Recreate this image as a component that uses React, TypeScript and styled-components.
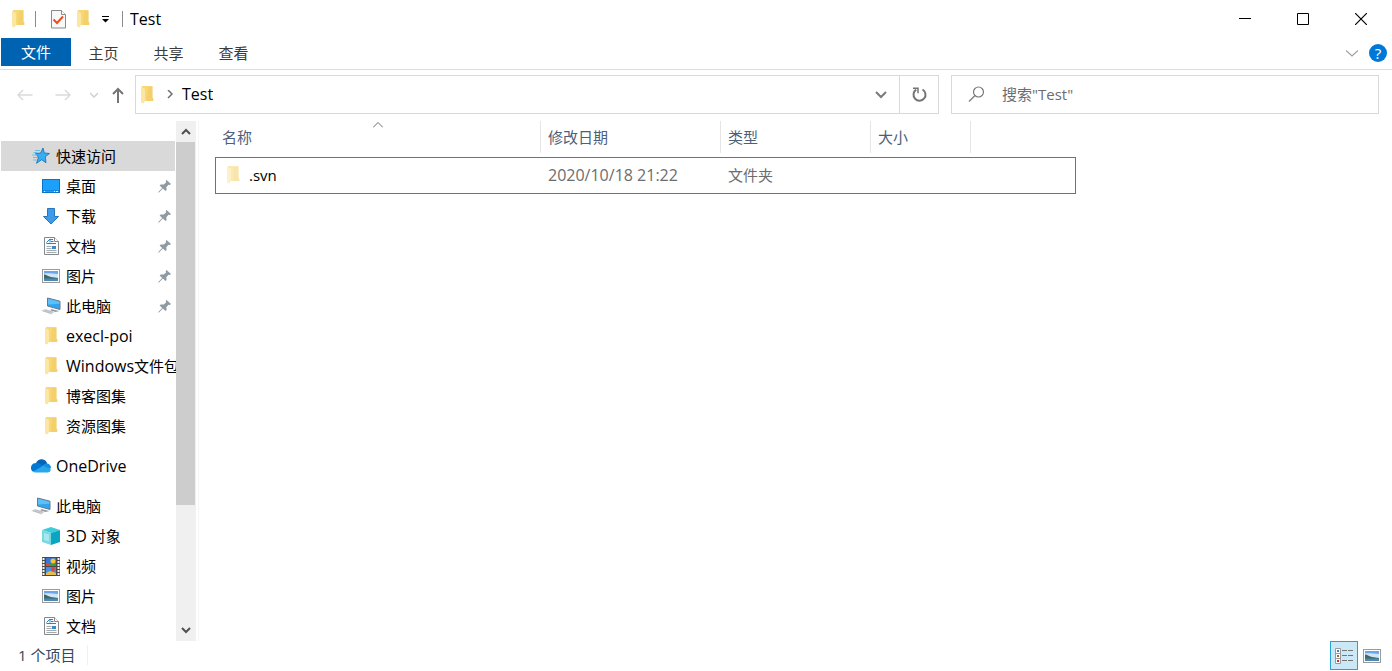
import React from 'react';
import styled, { createGlobalStyle } from 'styled-components';

const GlobalStyle = createGlobalStyle`
  * { box-sizing: border-box; }
  html, body { margin: 0; padding: 0; background: #fff; }
  body, button, input {
    font-family: "Open Sans", "Noto Sans CJK SC", sans-serif;
    font-size: 15px;
    line-height: 20px;
  }
  button { border: 0; padding: 0; background: transparent; color: inherit; }
  svg { display: block; flex: none; }
`;

/* ---------- icons ---------- */

const FolderIcon = ({ faded = false }: { faded?: boolean }) => (
  <svg width="13" height="18" viewBox="0 0 13 18" opacity={faded ? 0.55 : 1} aria-hidden="true">
    <path d="M1 0h10.500v12h.7v3H2z" fill="#f8d775" />
    <path d="M7 1h4.500v11h.7v3H6z" fill="#f0c963" opacity=".5" />
    <path d="M0 .5l4 2.500v12L2.500 17.500 0 16.500z" fill="#fde6a2" />
  </svg>
);

const CheckDocIcon = () => (
  <svg width="15" height="19" viewBox="0 0 15 19" aria-hidden="true">
    <path d="M.5.500h10l4 4v13.500H.5z" fill="#f7f8fa" stroke="#8a8a8a" />
    <path d="M10.500.500v4h4" fill="#fff" stroke="#8a8a8a" />
    <path d="M2.500 9.500l3.500 3.500 6-6.500" fill="none" stroke="#e8501a" strokeWidth="2" />
  </svg>
);

const StarIcon = () => (
  <svg width="18" height="18" viewBox="0 0 18 18" aria-hidden="true">
    <path d="M11 1l1.300 5 5.200.5-4.200 3.200.7 6-4.400-3-5.100 3.600 2-6L3.500 6.500l5-.4z" fill="#35aef5" stroke="#1a78b8" strokeWidth=".9" />
    <path d="M3 3.500h5M1.500 5.500h4M0 8h5M1 10.500h5M1 13h3.500" stroke="#6cbcee" />
  </svg>
);

const DesktopIcon = () => (
  <svg width="18" height="14" viewBox="0 0 18 14" aria-hidden="true">
    <rect x=".5" y=".5" width="17" height="13" fill="#1ba1fb" stroke="#0c74c4" />
    <path d="M1 11.500h16" stroke="#1389dc" />
    <path d="M2 12.500h1M12 12.500h1M14 12.500h2" stroke="#d8f0ff" />
  </svg>
);

const DownloadIcon = () => (
  <svg width="16" height="17" viewBox="0 0 16 17" aria-hidden="true">
    <path d="M4.500.500h7v8h4L8 16 .5 8.500h4z" fill="#3d9be9" stroke="#2577bd" />
  </svg>
);

const DocumentIcon = () => (
  <svg width="15" height="18" viewBox="0 0 15 18" aria-hidden="true">
    <path d="M.5.500h10l4 4v13H.5z" fill="#fafbfc" stroke="#85898d" />
    <path d="M10.500.500v4h4" fill="#fff" stroke="#85898d" />
    <path d="M2.500 5.500L6 2v3.500M6 2.500h3M7 4.500h2.500M2.500 6.500h9.500" fill="none" stroke="#1f86cc" />
    <path d="M2.500 9.500h5M2.500 11.500h5M2.500 13.500h10M2.500 15.500h10" stroke="#a3abb1" />
    <rect x="8" y="9" width="4" height="3" fill="#3c8ac4" />
  </svg>
);

const PictureIcon = () => (
  <svg width="18" height="14" viewBox="0 0 18 14" aria-hidden="true">
    <rect x=".5" y=".5" width="17" height="13" fill="#fff" stroke="#9a9a9a" />
    <rect x="2" y="2" width="14" height="10" fill="#6aa6ee" />
    <path d="M2 4.500c4-.5 8 0 14 .5v4H2z" fill="#cfe6f9" />
    <path d="M2 5.500c2.500 0 3.500 1.500 7 2.500l7 1v1.500H2z" fill="#3f6b60" />
    <path d="M2 9.500h14V12H2z" fill="#4f88b0" />
  </svg>
);

const ComputerIcon = () => (
  <svg width="20" height="18" viewBox="0 0 20 18" aria-hidden="true">
    <path d="M6.500 1l12.500 3.200v8.300L6.500 9z" fill="#2ea5ee" stroke="#68788a" />
    <path d="M7 1.700l11.500 3v2L7 7.500z" fill="#5cc0fb" />
    <path d="M10 12l5 1.300 3.500.7-4 1-5-1.500z" fill="#8e9aa5" />
    <path d="M0 13.700l4-1.700 9.500 2.800-3 2.700z" fill="#d3d7db" />
    <path d="M2 13.800l8 2.400M4 13l8 2.200" stroke="#a9b0b7" strokeWidth=".7" />
  </svg>
);

const CloudIcon = () => (
  <svg width="20" height="14" viewBox="0 0 20 14" aria-hidden="true">
    <path d="M5 4C6 1.500 8.500 0 11 .2c2.700.2 4.600 2 5.200 4.300L10 9z" fill="#0364b8" />
    <path d="M5 4c2-.3 3.500.3 5 1.300L14 8 2 12.800C-.4 11-.5 8 .7 6.200 1.700 4.700 3.200 4 5 4z" fill="#0078d4" />
    <path d="M11.500 6.500c1.500-1.500 3-2.200 4.800-2C18.500 4.700 20 6.500 20 9l-3 2z" fill="#1490df" />
    <path d="M2 12.800L12 6.700l7.800 3.500c0 2-1.500 3.300-3.500 3.300H4.500c-1 0-1.800-.2-2.500-.7z" fill="#28a8ea" />
  </svg>
);

const CubeIcon = () => (
  <svg width="18" height="18" viewBox="0 0 18 18" aria-hidden="true">
    <path d="M0 3l9-3 9 3-9 3z" fill="#3ecbdc" />
    <path d="M0 3l9 3v12l-9-3z" fill="#7ad8e2" />
    <path d="M9 6l9-3v12l-9 3z" fill="#0aa5c2" />
    <path d="M2 6l5 1.500v7L2 13z" fill="#c3eef2" opacity=".65" />
  </svg>
);

const VideoIcon = () => (
  <svg width="18" height="19" viewBox="0 0 18 19" aria-hidden="true">
    <rect width="18" height="19" fill="#4a4a4a" />
    <path d="M1.500 1v17M16.500 1v17" stroke="#f2f2f2" strokeWidth="2" strokeDasharray="2 1" />
    <rect x="4" y="1" width="10" height="8" fill="#3578d8" />
    <rect x="4" y="10" width="10" height="8" fill="#4a90e2" />
    <circle cx="11" cy="4" r="2.500" fill="#f2c230" />
    <path d="M4 6h4v3H4z" fill="#d9483b" />
    <path d="M8 7h5v2H8z" fill="#3f9a48" />
    <circle cx="11" cy="12" r="2" fill="#e2452f" />
    <path d="M4 16l4-2 6 2v2H4z" fill="#e9bd4b" />
  </svg>
);

const PinIcon = () => (
  <svg width="14" height="14" viewBox="0 0 14 14" aria-hidden="true">
    <path d="M8.500 1L13 5l-1.200 1-1.300-.2-2.200 2.400.3 2.800L7.500 12 4.900 9.600 1 13.500H.3V13L4.200 9 1.600 6.500 2.700 5.400l3 .2 2.400-2.200L7.700 2z" fill="#8f9aa3" />
  </svg>
);

type StrokeProps = { d: string; w: number; h: number; color: string; weight?: number };
const Stroke = ({ d, w, h, color, weight = 1 }: StrokeProps) => (
  <svg width={w} height={h} viewBox={`0 0 ${w} ${h}`} aria-hidden="true">
    <path d={d} fill="none" stroke={color} strokeWidth={weight} />
  </svg>
);

const ListViewIcon = () => (
  <svg width="18" height="16" viewBox="0 0 18 16" aria-hidden="true">
    <path d="M.5.500h5v15h-5zM0 5.500h6M0 10.500h6" fill="#fff" stroke="#9a9a9a" />
    <path d="M7 2.500h5M13 2.500h5M7 7.500h5M13 7.500h5M7 12.500h5M13 12.500h5" stroke="#757575" />
    <rect x="2" y="2" width="2" height="2" fill="#3b83bd" />
    <rect x="2" y="7" width="2" height="2" fill="#9a6b3a" />
    <rect x="2" y="12" width="2" height="2" fill="#cf2a2a" />
  </svg>
);

/* ---------- frame ---------- */

const Window = styled.div`
  display: flex;
  flex-direction: column;
  height: 100vh;
  overflow: hidden;
  color: #000;
`;

const Latin = styled.span`
  font-size: 16px;
`;

const TitleBar = styled.header`
  display: flex;
  align-items: center;
  height: 38px;
  padding: 0 2px 0 12px;
`;

const Divider = styled.span`
  width: 1px;
  height: 16px;
  background: #8c8c8c;
`;

const QuickTools = styled.div`
  display: flex;
  align-items: center;
  gap: 11px;
  margin: 0 12px 0 15px;
`;

const TitleStart = styled.div`
  display: flex;
  align-items: center;
  gap: 10px;
`;

const Title = styled.h1`
  flex: 1;
  margin: 0 0 0 7px;
  font-size: 16px;
  font-weight: 400;
`;

const CaptionButton = styled.button`
  display: grid;
  place-items: center;
  width: 58px;
  height: 38px;
`;

const Ribbon = styled.nav`
  display: flex;
  height: 32px;
  padding: 0 5px 3px 1px;
  border-bottom: 1px solid #dadbdc;
`;

const Tab = styled.button<{ $primary?: boolean }>`
  width: ${p => (p.$primary ? 70 : 65)}px;
  height: 28px;
  padding-top: ${p => (p.$primary ? 0 : 2)}px;
  background: ${p => (p.$primary ? '#0063b1' : 'transparent')};
  color: ${p => (p.$primary ? '#fff' : '#3b3b3b')};
`;

const RibbonEnd = styled.div`
  display: flex;
  align-items: center;
  gap: 11px;
  height: 30px;
  margin-left: auto;
`;

const HelpButton = styled.button`
  width: 18px;
  height: 18px;
  border-radius: 50%;
  background: #0078d7;
  color: #fff;
  font-size: 15px;
  line-height: 18px;
  text-align: center;
`;

const LocationBar = styled.div`
  display: flex;
  height: 51px;
  padding: 5px 13px 7px 11px;
`;

const NavButtons = styled.div`
  display: flex;
  align-items: center;
  width: 124px;
`;

const NavButton = styled.button<{ $width: number }>`
  display: grid;
  place-items: center;
  flex: none;
  width: ${p => p.$width}px;
  height: 38px;
`;

const AddressBox = styled.div`
  display: flex;
  flex: 1;
  align-items: center;
  min-width: 0;
  margin-right: 12px;
  padding-left: 5px;
  border: 1px solid #d9d9d9;
`;

const Crumb = styled.button`
  margin-right: auto;
  padding-bottom: 2px;
  font-size: 16px;
`;

const Chevron = styled.span`
  margin: 0 9px 0 13px;
`;

const BoxButton = styled.button<{ $ruled?: boolean }>`
  display: grid;
  place-items: center;
  align-self: stretch;
  width: ${p => (p.$ruled ? 39 : 36)}px;
  border-left: ${p => (p.$ruled ? '1px solid #d9d9d9' : '0')};
`;

const SearchBox = styled.label`
  display: flex;
  flex: 0 1 428px;
  align-items: center;
  gap: 17px;
  padding-left: 16px;
  border: 1px solid #d9d9d9;
`;

const SearchInput = styled.input`
  flex: 1;
  min-width: 0;
  padding: 0 0 2px;
  border: 0;
  outline: 0;
  color: #6d6d6d;
  &::placeholder { color: #6d6d6d; opacity: 1; }
`;

/* ---------- navigation pane ---------- */

const Body = styled.div`
  display: flex;
  flex: 1;
  min-height: 0;
`;

const Sidebar = styled.aside`
  display: flex;
  width: 199px;
  flex: none;
  padding-right: 2px;
  border-right: 1px solid #f5f5f5;
`;

const Tree = styled.ul`
  flex: 1;
  min-width: 0;
  margin: 0;
  padding: 20px 1px 0;
  overflow: hidden;
  list-style: none;
`;

const TreeRow = styled.li<{ $selected?: boolean; $gap?: boolean }>`
  height: 30px;
  margin-top: ${p => (p.$gap ? 10 : 0)}px;
  background: ${p => (p.$selected ? '#d9d9d9' : 'transparent')};
`;

const TreeLink = styled.a<{ $nested?: boolean }>`
  display: flex;
  align-items: center;
  height: 30px;
  padding-left: ${p => (p.$nested ? 38 : 28)}px;
  padding-right: 3px;
  color: #000;
  text-decoration: none;
  white-space: nowrap;
`;

const IconSlot = styled.span`
  display: flex;
  justify-content: center;
  flex: none;
  width: 24px;
  margin-right: 3px;
`;

const TreeLabel = styled.span`
  flex: 1;
`;

const ScrollTrack = styled.div`
  display: flex;
  flex-direction: column;
  width: 20px;
  background: #f0f0f0;
`;

const ScrollButton = styled.button`
  display: grid;
  place-items: center;
  width: 19px;
  height: 21px;
`;

const ScrollRun = styled.div`
  flex: 1;
`;

const ScrollThumb = styled.div`
  width: 19px;
  height: 76%;
  background: #cdcdcd;
`;

/* ---------- file list ---------- */

const Content = styled.main`
  flex: 1;
  min-width: 0;
  padding-left: 16px;
`;

const FileTable = styled.table`
  width: 861px;
  max-width: 100%;
  table-layout: fixed;
  border-spacing: 0;
`;

const HeadCell = styled.th<{ $width?: number }>`
  position: relative;
  width: ${p => (p.$width ? `${p.$width}px` : 'auto')};
  padding: 0 0 4px;
  color: #4c607a;
  font-weight: 400;
  text-align: left;
`;

const HeadLabel = styled.div`
  height: 32px;
  padding: 6px 7px;
  border-right: 1px solid #e5e5e5;
`;

const SortMark = styled.span`
  position: absolute;
  top: 1px;
  left: 50%;
  transform: translateX(-50%);
`;

const FileRow = styled.tr`
  outline: 1px solid #e81ee8;
  outline-offset: -1px;
`;

const Cell = styled.td`
  height: 37px;
  padding: 0 7px 2px;
  color: #6d6d6d;
`;

const FileName = styled.span`
  display: flex;
  align-items: center;
  gap: 9px;
  padding-left: 5px;
  color: #000;
`;

/* ---------- status bar ---------- */

const StatusBar = styled.footer`
  display: flex;
  align-items: flex-start;
  height: 30px;
  padding: 0 6px 0 18px;
  color: #33475f;
`;

const Count = styled.span`
  margin-top: 4px;
  padding-right: 12px;
  border-right: 1px solid #f0f0f0;
`;

const ViewButtons = styled.div`
  display: flex;
  margin-left: auto;
`;

const ViewButton = styled.button<{ $active?: boolean }>`
  display: grid;
  place-items: center;
  width: 28px;
  height: 29px;
  border: 1px solid ${p => (p.$active ? '#26a0da' : 'transparent')};
  background: ${p => (p.$active ? '#cbe8f6' : 'transparent')};
`;

type Item = {
  label: React.ReactNode;
  icon: React.ReactNode;
  nested?: boolean;
  pinned?: boolean;
  selected?: boolean;
  gap?: boolean;
};

const items: Item[] = [
  { label: '快速访问', icon: <StarIcon />, selected: true },
  { label: '桌面', icon: <DesktopIcon />, nested: true, pinned: true },
  { label: '下载', icon: <DownloadIcon />, nested: true, pinned: true },
  { label: '文档', icon: <DocumentIcon />, nested: true, pinned: true },
  { label: '图片', icon: <PictureIcon />, nested: true, pinned: true },
  { label: '此电脑', icon: <ComputerIcon />, nested: true, pinned: true },
  { label: <Latin>execl-poi</Latin>, icon: <FolderIcon />, nested: true },
  { label: <><Latin>Windows</Latin>文件包</>, icon: <FolderIcon />, nested: true },
  { label: '博客图集', icon: <FolderIcon />, nested: true },
  { label: '资源图集', icon: <FolderIcon />, nested: true },
  { label: <Latin>OneDrive</Latin>, icon: <CloudIcon />, gap: true },
  { label: '此电脑', icon: <ComputerIcon />, gap: true },
  { label: <><Latin>3D</Latin> 对象</>, icon: <CubeIcon />, nested: true },
  { label: '视频', icon: <VideoIcon />, nested: true },
  { label: '图片', icon: <PictureIcon />, nested: true },
  { label: '文档', icon: <DocumentIcon />, nested: true },
];

export default function App() {
  return (
    <Window>
      <GlobalStyle />
      <TitleBar>
        <TitleStart>
          <FolderIcon />
          <Divider />
        </TitleStart>
        <QuickTools>
          <button aria-label="属性"><CheckDocIcon /></button>
          <button aria-label="新建文件夹"><FolderIcon /></button>
          <button aria-label="自定义快速访问工具栏">
            <svg width="9" height="7" viewBox="0 0 9 7" aria-hidden="true">
              <path d="M1 .5h7" stroke="#000" />
              <path d="M1 3h7L4.500 6.500z" />
            </svg>
          </button>
        </QuickTools>
        <Divider />
        <Title>Test</Title>
        <CaptionButton aria-label="最小化"><Stroke w={12} h={12} d="M0 5.500h12" color="#000" /></CaptionButton>
        <CaptionButton aria-label="最大化"><Stroke w={12} h={12} d="M.5.500h11v11H.5z" color="#000" /></CaptionButton>
        <CaptionButton aria-label="关闭"><Stroke w={12} h={12} d="M0 0l12 12M12 0L0 12" color="#000" weight={1.2} /></CaptionButton>
      </TitleBar>

      <Ribbon>
        <Tab $primary>文件</Tab>
        <Tab>主页</Tab>
        <Tab>共享</Tab>
        <Tab>查看</Tab>
        <RibbonEnd>
          <button aria-label="展开功能区"><Stroke w={12} h={7} d="M0 .5l6 5.500 6-5.500" color="#a0a0a0" weight={1.2} /></button>
          <HelpButton>?</HelpButton>
        </RibbonEnd>
      </Ribbon>

      <LocationBar>
        <NavButtons>
          <NavButton $width={28} aria-label="后退"><Stroke w={16} h={12} d="M15.500 6H1M6 1L1 6l5 5" color="#dadada" weight={1.5} /></NavButton>
          <NavButton $width={48} aria-label="前进"><Stroke w={16} h={12} d="M.5 6H15M10 1l5 5-5 5" color="#dadada" weight={1.5} /></NavButton>
          <NavButton $width={14} aria-label="最近浏览的位置"><Stroke w={8} h={6} d="M0 1l4 4 4-4" color="#d0d0d0" weight={1.5} /></NavButton>
          <NavButton $width={34} aria-label="向上"><Stroke w={12} h={16} d="M6 16V2M1 7l5-5 5 5" color="#757575" weight={2} /></NavButton>
        </NavButtons>
        <AddressBox>
          <FolderIcon />
          <Chevron><Stroke w={6} h={10} d="M1 0l4 4-4 4" color="#6d6d6d" weight={1.5} /></Chevron>
          <Crumb>Test</Crumb>
          <BoxButton aria-label="历史位置"><Stroke w={12} h={8} d="M1 1l5 5 5-5" color="#7a7a7a" weight={2} /></BoxButton>
          <BoxButton $ruled aria-label="刷新">
            <svg width="16" height="15" viewBox="0 0 16 15" aria-hidden="true">
              <path d="M11.500 2.500a6 6 0 1 1-6.300.2" fill="none" stroke="#757575" strokeWidth="2" />
              <path d="M2 1.300h5v5" fill="none" stroke="#757575" strokeWidth="1.500" />
            </svg>
          </BoxButton>
        </AddressBox>
        <SearchBox>
          <svg width="17" height="17" viewBox="0 0 17 17" aria-hidden="true">
            <circle cx="10.500" cy="6" r="5" fill="none" stroke="#7a7a7a" strokeWidth="1.200" />
            <path d="M7 9.500L1 15.500" stroke="#7a7a7a" strokeWidth="1.300" />
          </svg>
          <SearchInput type="search" aria-label="搜索" placeholder={'搜索"Test"'} />
        </SearchBox>
      </LocationBar>

      <Body>
        <Sidebar>
          <Tree>
            {items.map((item, i) => (
              <TreeRow key={i} $selected={item.selected} $gap={item.gap}>
                <TreeLink href="#" $nested={item.nested}>
                  <IconSlot>{item.icon}</IconSlot>
                  <TreeLabel>{item.label}</TreeLabel>
                  {item.pinned && <PinIcon />}
                </TreeLink>
              </TreeRow>
            ))}
          </Tree>
          <ScrollTrack>
            <ScrollButton aria-label="向上滚动"><Stroke w={10} h={8} d="M1 6l4-4 4 4" color="#505050" weight={2} /></ScrollButton>
            <ScrollRun><ScrollThumb /></ScrollRun>
            <ScrollButton aria-label="向下滚动"><Stroke w={10} h={8} d="M1 1l4 4 4-4" color="#505050" weight={2} /></ScrollButton>
          </ScrollTrack>
        </Sidebar>
        <Content>
          <FileTable>
            <thead>
              <tr>
                <HeadCell $width={326}>
                  <SortMark><Stroke w={10} h={6} d="M0 5.500l5-5 5 5" color="#6d6d6d" /></SortMark>
                  <HeadLabel>名称</HeadLabel>
                </HeadCell>
                <HeadCell $width={180}><HeadLabel>修改日期</HeadLabel></HeadCell>
                <HeadCell $width={150}><HeadLabel>类型</HeadLabel></HeadCell>
                <HeadCell $width={100}><HeadLabel>大小</HeadLabel></HeadCell>
                <HeadCell as="td" />
              </tr>
            </thead>
            <tbody>
              <FileRow>
                <Cell><FileName><FolderIcon faded />.svn</FileName></Cell>
                <Cell><Latin>2020/10/18 21:22</Latin></Cell>
                <Cell>文件夹</Cell>
                <Cell />
                <Cell />
              </FileRow>
            </tbody>
          </FileTable>
        </Content>
      </Body>

      <StatusBar>
        <Count>1 个项目</Count>
        <ViewButtons>
          <ViewButton $active aria-label="详细信息"><ListViewIcon /></ViewButton>
          <ViewButton aria-label="大缩略图"><PictureIcon /></ViewButton>
        </ViewButtons>
      </StatusBar>
    </Window>
  );
}
